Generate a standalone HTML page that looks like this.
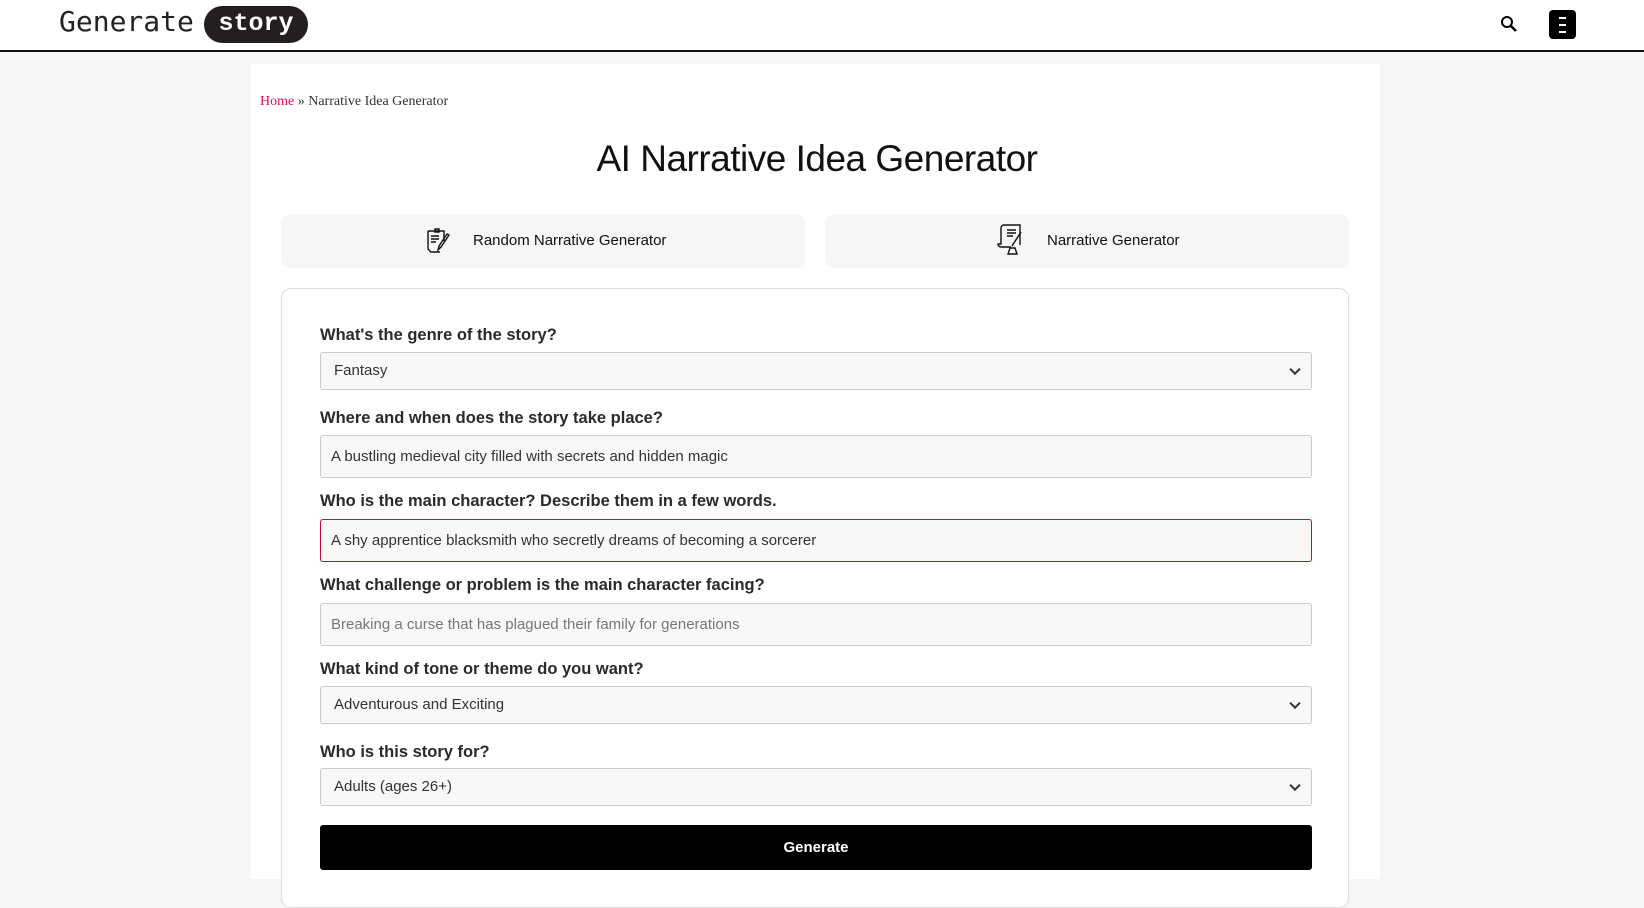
<!DOCTYPE html>
<html><head><meta charset="utf-8"><style>
*{box-sizing:border-box;margin:0;padding:0}
body{width:1644px;height:879px;overflow:hidden;background:#f6f6f6;font-family:"Liberation Sans",sans-serif;position:relative}
.hdr{position:absolute;left:0;top:0;width:1644px;height:52px;background:#fff;border-bottom:2px solid #111}
.logo{position:absolute;left:59px;top:5px;font-family:"DejaVu Sans Mono","Liberation Mono",monospace;font-size:28px;color:#222;letter-spacing:0px}
.pill{position:absolute;left:204px;top:6px;width:104px;height:37px;background:#231f20;border-radius:19px;color:#fff;font-family:"Liberation Mono",monospace;font-weight:bold;font-size:25px;text-align:center;line-height:35px}
.col{position:absolute;left:251px;top:64px;width:1129px;height:815px;background:#fff}
.bc{position:absolute;left:260px;top:94px;font-family:"Liberation Serif",serif;font-size:14px;color:#333}
.bc span{color:#d2145a}
h1{position:absolute;left:0;width:1644px;top:138px;text-align:center;font-weight:normal;font-size:37px;color:#111;padding-right:10px;letter-spacing:-0.5px}
.card{position:absolute;top:214px;height:54px;background:#f6f6f6;border-radius:10px;font-size:15px;color:#111}
.card .t{position:absolute;top:18px}
.form{position:absolute;left:281px;top:288px;width:1068px;height:620px;border:1px solid #ddd;border-radius:10px;background:#fff}
.lb{position:absolute;left:320px;font-size:16.5px;font-weight:bold;color:#2a2a2a}
.in{position:absolute;left:320px;width:992px;background:#f8f8f8;border:1px solid #ccc;border-radius:3px;font-size:15px;color:#333;padding-left:10px}
.sel{padding-left:13px}
.sel:after{content:"";position:absolute;right:12px;top:50%;width:6px;height:6px;border-right:2px solid #333;border-bottom:2px solid #333;transform:translateY(-70%) rotate(45deg)}
.btn{position:absolute;left:320px;top:825px;width:992px;height:45px;background:#000;border-radius:3px;color:#fff;font-weight:bold;font-size:15px;text-align:center;line-height:45px}
</style></head><body>
<div class="hdr">
<div class="logo">Generate</div><div class="pill">story</div>
<svg style="position:absolute;left:1500px;top:15px" width="18" height="18" viewBox="0 0 18 18"><circle cx="7" cy="7" r="5" fill="none" stroke="#000" stroke-width="2"/><path d="M10.5 10.5L16 16" stroke="#000" stroke-width="2.5"/></svg>
<div style="position:absolute;left:1549px;top:10px;width:27px;height:29px;background:#000;border-radius:4px"><div style="position:absolute;left:10px;top:7px;width:7px;height:2px;background:#fff"></div><div style="position:absolute;left:10px;top:14px;width:7px;height:2px;background:#fff"></div><div style="position:absolute;left:10px;top:21px;width:7px;height:2px;background:#fff"></div></div>
</div>
<div class="col"></div>
<div class="bc"><span>Home</span> » Narrative Idea Generator</div>
<h1>AI Narrative Idea Generator</h1>
<div class="card" style="left:281px;width:524px">
<svg style="position:absolute;left:144px;top:12px" width="26" height="28" viewBox="0 0 26 28" fill="none" stroke="#111" stroke-width="1.4"><path d="M3 5h16v10M3 5v18l3 3h9"/><path d="M6 10h8M6 13h8M6 16h5"/><path d="M22 8l-8 12-1 4 3-3 8-12z"/><path d="M10 3h4v3h-4z"/></svg>
<div class="t" style="left:192px">Random Narrative Generator</div></div>
<div class="card" style="left:825px;width:524px">
<svg style="position:absolute;left:170px;top:8px" width="30" height="36" viewBox="0 0 30 36" fill="none" stroke="#111" stroke-width="1.4"><path d="M9 3h16v20M9 3a3 3 0 0 0-3 3v16H3a3 3 0 0 0 3 3h10"/><path d="M12 8h9M12 11h9M12 14h6"/><path d="M26 10l-9 14"/><path d="M15 26h5l2 6h-9z"/></svg>
<div class="t" style="left:222px">Narrative Generator</div></div>
<div class="form"></div>
<div class="lb" style="top:326px">What's the genre of the story?</div>
<div class="in sel" style="top:352px;height:38px;line-height:36px">Fantasy</div>
<div class="lb" style="top:409px">Where and when does the story take place?</div>
<div class="in" style="top:435px;height:43px;line-height:41px">A bustling medieval city filled with secrets and hidden magic</div>
<div class="lb" style="top:492px">Who is the main character? Describe them in a few words.</div>
<div class="in" style="top:519px;height:43px;line-height:41px;border-color:#c8102e">A shy apprentice blacksmith who secretly dreams of becoming a sorcerer</div>
<div class="lb" style="top:576px">What challenge or problem is the main character facing?</div>
<div class="in" style="top:603px;height:43px;line-height:41px;color:#777">Breaking a curse that has plagued their family for generations</div>
<div class="lb" style="top:660px">What kind of tone or theme do you want?</div>
<div class="in sel" style="top:686px;height:38px;line-height:36px">Adventurous and Exciting</div>
<div class="lb" style="top:743px">Who is this story for?</div>
<div class="in sel" style="top:768px;height:38px;line-height:36px">Adults (ages 26+)</div>
<div class="btn">Generate</div>
</body></html>
